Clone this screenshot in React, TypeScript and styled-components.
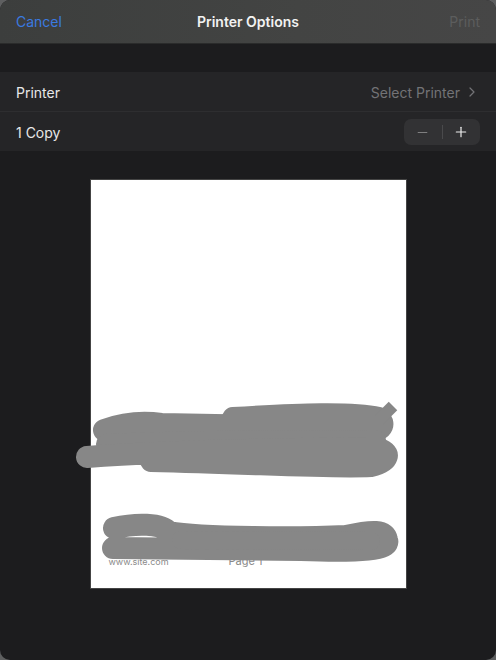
import styled, { createGlobalStyle } from 'styled-components';
import { ChevronRight, Minus, Plus } from 'lucide-react';

const GlobalStyles = createGlobalStyle`
  html, body {
    margin: 0;
    padding: 0;
    background: #5e5f60;
  }
  body {
    font-family: Inter, "Noto Sans", "Liberation Sans", sans-serif;
    -webkit-font-smoothing: antialiased;
  }
`;

const Sheet = styled.div`
  width: 496px;
  height: 660px;
  background: #1c1c1e;
  border-radius: 10px;
  overflow: hidden;
  display: flex;
  flex-direction: column;
`;

const NavBar = styled.div`
  height: 44px;
  flex-shrink: 0;
  display: grid;
  grid-template-columns: 1fr auto 1fr;
  align-items: center;
  padding: 0 16px;
  background: linear-gradient(90deg, #3c3e3d 0%, #434443 60%, #464646 100%);
  border-bottom: 1px solid #2a2b2b;
  box-sizing: border-box;
`;

const NavButton = styled.span<{ $align: 'left' | 'right'; $disabled?: boolean }>`
  font-size: 14px;
  color: ${(p) => (p.$disabled ? '#5c5d5d' : '#3a7ae0')};
  justify-self: ${(p) => (p.$align === 'left' ? 'start' : 'end')};
`;

const Title = styled.span`
  font-size: 14px;
  font-weight: 600;
  color: #f2f2f2;
`;

const Group = styled.div`
  margin-top: 28px;
  background: #252527;
  display: flex;
  flex-direction: column;
`;

const Row = styled.div<{ $last?: boolean }>`
  height: 40px;
  display: flex;
  align-items: center;
  justify-content: space-between;
  padding: 1px 16px 0;
  box-sizing: border-box;
  border-bottom: 1px solid ${(p) => (p.$last ? '#1c1c1e' : '#2e2e30')};
`;

const Label = styled.span`
  font-size: 14px;
  color: #e8e8e8;
`;

const Detail = styled.span`
  display: flex;
  align-items: center;
  gap: 4px;
  font-size: 14px;
  color: #737376;
`;

const Stepper = styled.div`
  width: 76px;
  height: 26px;
  border-radius: 7px;
  background: #323234;
  display: flex;
  align-items: center;
`;

const StepButton = styled.div`
  flex: 1;
  display: flex;
  align-items: center;
  justify-content: center;
  color: #eeeeee;
`;

const StepDivider = styled.div`
  width: 1px;
  height: 14px;
  background: #4a4a4c;
`;

const PreviewArea = styled.div`
  flex: 1;
  display: flex;
  justify-content: center;
  padding-top: 28px;
`;

const Page = styled.div`
  position: relative;
  width: 315px;
  height: 408px;
  background: #ffffff;
  box-shadow: 0 0 0 1px #444;
  display: flex;
  flex-direction: column;
  justify-content: flex-end;
  padding: 0 18px 20px;
  box-sizing: border-box;
`;

const Footer = styled.div`
  display: flex;
  align-items: center;
  font-size: 11px;
  color: #8a8a8a;
`;

const FooterLeft = styled.span`
  width: 120px;
  font-size: 9px;
`;

const Scribbles = styled.svg`
  position: absolute;
  left: -20px;
  top: 220px;
  overflow: visible;
`;

export default function App() {
  return (
    <>
      <GlobalStyles />
      <Sheet>
        <NavBar>
          <NavButton $align="left">Cancel</NavButton>
          <Title>Printer Options</Title>
          <NavButton $align="right" $disabled>
            Print
          </NavButton>
        </NavBar>
        <Group>
          <Row>
            <Label>Printer</Label>
            <Detail>
              Select Printer
              <ChevronRight size={16} strokeWidth={1.8} />
            </Detail>
          </Row>
          <Row $last>
            <Label>1 Copy</Label>
            <Stepper>
              <StepButton>
                <Minus size={15} strokeWidth={1.4} color="#8a8a8c" />
              </StepButton>
              <StepDivider />
              <StepButton>
                <Plus size={16} strokeWidth={1.8} />
              </StepButton>
            </Stepper>
          </Row>
        </Group>
        <PreviewArea>
          <Page>
            <Footer>
              <FooterLeft>www.site.com</FooterLeft>
              <span>Page 1</span>
            </Footer>
            <Scribbles width="340" height="170" viewBox="70 400 340 170">
              <g
                fill="none"
                stroke="#878787"
                strokeLinecap="round"
                strokeLinejoin="round"
              >
                <path
                  strokeWidth="22"
                  d="M103 430 C120 424 140 421 160 424 L275 426 M232 418 C300 414 350 412 378 418 C386 425 380 433 360 434 L240 437 L115 439"
                />
                <path strokeWidth="20" d="M105 444 C200 440 300 440 375 440" />
                <path
                  strokeWidth="22"
                  d="M86 457 C150 452 250 449 375 448 C392 452 388 462 370 466 C330 468 270 464 150 461"
                />
                <path strokeWidth="12" strokeLinecap="butt" d="M378 420 L392 406" />
                <path
                  strokeWidth="22"
                  d="M113 528 C135 523 160 523 168 532 C200 538 300 538 345 536 C372 530 384 530 386 540 C390 550 360 552 300 550 L112 548"
                />
                <path strokeWidth="18" d="M180 540 L370 541" />
              </g>
            </Scribbles>
          </Page>
        </PreviewArea>
      </Sheet>
    </>
  );
}
